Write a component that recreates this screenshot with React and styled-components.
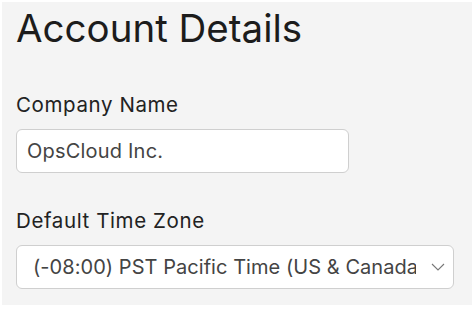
import React, { useState } from "react";
import styled, { createGlobalStyle } from "styled-components";

const GlobalStyle = createGlobalStyle`
    html, body {
        margin: 0;
        padding: 0;
        background: #ffffff;
    }
    body {
        font-family: "Inter", "Noto Sans", sans-serif;
        -webkit-font-smoothing: antialiased;
    }
`;

const Panel = styled.div`
    box-sizing: border-box;
    margin: 2px;
    width: 470px;
    height: 303px;
    background: #f4f4f4;
    padding: 4px 14px 0 14px;
`;

const Title = styled.h1`
    margin: 0 0 43px 0;
    font-size: 38.5px;
    font-weight: 400;
    line-height: 44px;
    color: #1c1c1c;
    letter-spacing: 0;
`;

const Field = styled.div`
    display: flex;
    flex-direction: column;
    gap: 12px;
    margin-bottom: 36px;
`;

const Label = styled.label`
    font-size: 20.5px;
    line-height: 24px;
    color: #222;
    letter-spacing: 0.6px;
`;

const TextInput = styled.input`
    box-sizing: border-box;
    width: ${(p) => p.$width}px;
    height: 44px;
    padding: 0 10px;
    border: 1.5px solid #cfcfcf;
    border-radius: 6px;
    background: #fff;
    font-family: inherit;
    font-size: 20px;
    letter-spacing: 0.2px;
    color: #444;
    outline: none;
`;

const SelectBox = styled.div`
    position: relative;
    box-sizing: border-box;
    width: ${(p) => p.$width}px;
    height: 44px;
    border: 1.5px solid #cfcfcf;
    border-radius: 6px;
    background: #fff;
    display: flex;
    align-items: center;
`;

const NativeSelect = styled.select`
    appearance: none;
    -webkit-appearance: none;
    border: none;
    background: transparent;
    width: 100%;
    height: 100%;
    padding: 0 37px 0 16px;
    font-family: inherit;
    font-size: 20px;
    letter-spacing: 0.05px;
    color: #444;
    outline: none;
    text-overflow: clip;
    white-space: nowrap;
    overflow: hidden;
`;

const Chevron = styled.svg`
    position: absolute;
    right: 8px;
    top: 50%;
    transform: translateY(-50%);
    pointer-events: none;
`;

export default function App() {
    const [company, setCompany] = useState("OpsCloud Inc.");
    const [zone, setZone] = useState("pst");

    return (
        <>
            <GlobalStyle />
            <Panel>
                <Title>Account Details</Title>
                <Field>
                    <Label>Company Name</Label>
                    <TextInput
                        $width={333}
                        value={company}
                        onChange={(e) => setCompany(e.target.value)}
                    />
                </Field>
                <Field>
                    <Label>Default Time Zone</Label>
                    <SelectBox $width={438}>
                        <NativeSelect value={zone} onChange={(e) => setZone(e.target.value)}>
                            <option value="pst">(-08:00) PST Pacific Time (US &amp; Canada)</option>
                            <option value="mst">(-07:00) MST Mountain Time (US &amp; Canada)</option>
                            <option value="cst">(-06:00) CST Central Time (US &amp; Canada)</option>
                            <option value="est">(-05:00) EST Eastern Time (US &amp; Canada)</option>
                        </NativeSelect>
                        <Chevron width="14" height="8" viewBox="0 0 14 8">
                            <path d="M1 1 L7 7 L13 1" fill="none" stroke="#777" strokeWidth="1.1" />
                        </Chevron>
                    </SelectBox>
                </Field>
            </Panel>
        </>
    );
}
